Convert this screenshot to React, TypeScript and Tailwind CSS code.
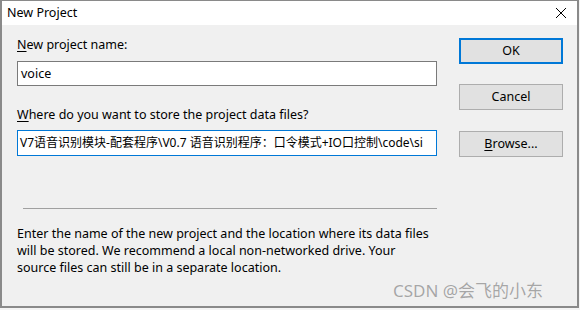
import React from "react";

const font = { fontFamily: '"Noto Sans", "Noto Sans CJK SC", sans-serif' };

function Btn({ children, primary = false }: { children: React.ReactNode; primary?: boolean }) {
  return (
    <div
      className={
        "flex h-[26px] w-[104px] items-center justify-center bg-[#e1e1e1] text-[12.5px] leading-[16px] text-black " +
        (primary ? "border-2 border-[#0078d7]" : "border border-[#adadad]")
      }
    >
      {children}
    </div>
  );
}

export default function App() {
  return (
    <div className="h-[310px] w-[580px] bg-[#f4f4f4]" style={font}>
      <div className="relative flex h-[308px] w-[579px] flex-col border-x-2 border-b-2 border-t border-[#8a8a8a] bg-[#f0f0f0]">
        <div className="flex h-[24px] items-center justify-between bg-white pl-[5px] pr-[10px]">
          <span className="text-[12.5px] leading-[16px] text-black">New Project</span>
          <svg width="12" height="12" viewBox="0 0 12 12">
            <path d="M1 1 L11 11 M11 1 L1 11" stroke="#000" strokeWidth="1" fill="none" />
          </svg>
        </div>
        <div className="flex pl-[15px] pt-[12px]">
          <div className="flex w-[420px] flex-col">
            <div className="text-[12.5px] leading-[16px] text-black">
              <span className="underline underline-offset-2">N</span>ew project name:
            </div>
            <div className="mt-[8px] flex h-[25px] items-center border border-[#7a7a7a] bg-white px-[3px] text-[12.5px] leading-[16px] text-black">
              voice
            </div>
            <div className="mt-[21px] text-[12.5px] leading-[16px] text-black">
              <span className="underline underline-offset-2">W</span>here do you want to store the project data files?
            </div>
            <div className="mt-[7px] flex h-[26px] items-center overflow-hidden whitespace-nowrap border border-[#0078d7] bg-white px-[2px] text-[12px] leading-[16px] text-black">
              V7语音识别模块-配套程序\V0.7 语音识别程序：口令模式+IO口控制\code\si
            </div>
          </div>
          <div className="ml-[22px] flex flex-col pt-[1px]">
            <Btn primary>OK</Btn>
            <div className="mt-[20px]">
              <Btn>Cancel</Btn>
            </div>
            <div className="mt-[21px]">
              <Btn>
                <span>
                  <span className="underline underline-offset-2">B</span>rowse...
                </span>
              </Btn>
            </div>
          </div>
        </div>
        <div className="ml-[21px] mt-[51px] h-px w-[414px] bg-[#a0a0a0]" />
        <div className="ml-[15px] mt-[16px] w-[440px] whitespace-nowrap text-[12.5px] leading-[17px] text-black">
          Enter the name of the new project and the location where its data files
          <br />
          will be stored. We recommend a local non-networked drive. Your
          <br />
          source files can still be in a separate location.
        </div>
        <div
          className="absolute left-[391px] top-[279px] whitespace-nowrap text-[17px] leading-[22px] text-[#a6a6a6]"
          style={{ textShadow: "0 0 1px #ffffff" }}
        >
          CSDN @会飞的小东
        </div>
      </div>
    </div>
  );
}
